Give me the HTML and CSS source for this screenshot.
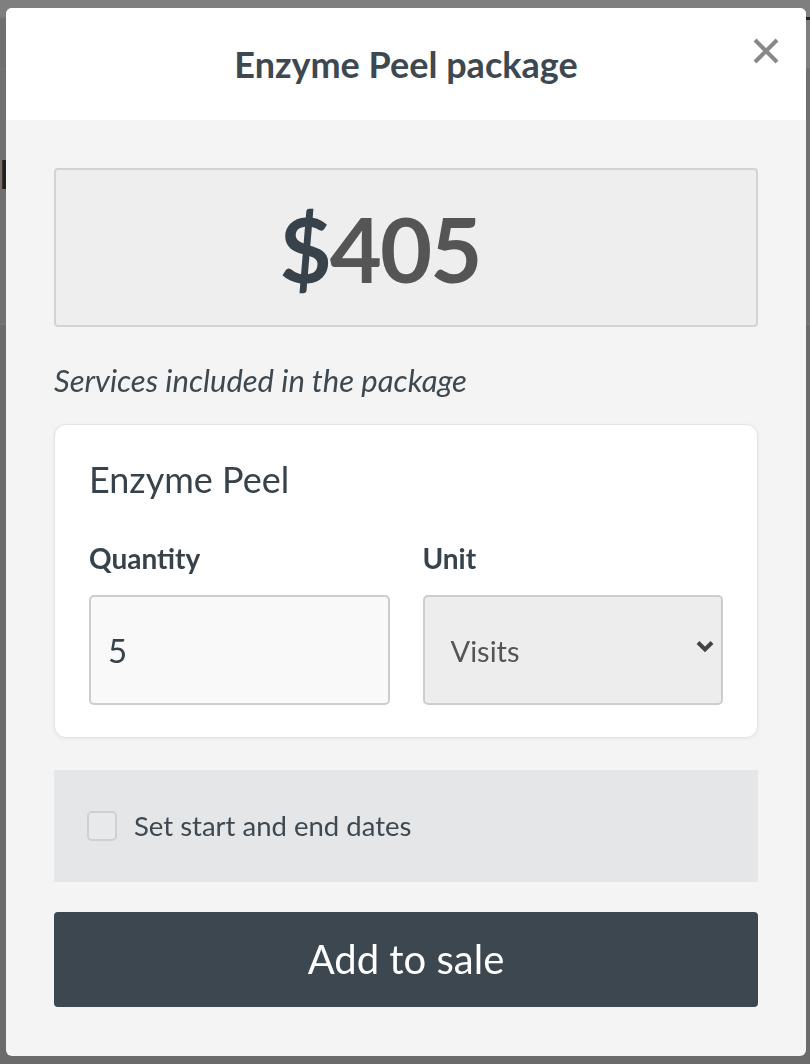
FILE: index.html
```html
<!DOCTYPE html>
<html lang="en">
<head>
<meta charset="utf-8">
<title>Enzyme Peel package</title>
<link rel="stylesheet" href="styles.css">
</head>
<body>
<div class="page">
  <div class="page-top"></div>
  <div class="page-header">
    <div class="ph-left"></div>
    <div class="ph-right"></div>
  </div>
  <div class="page-main">
    <div class="page-title">F</div>
  </div>
  <div class="page-rest"></div>
</div>

<div class="overlay">
  <div class="modal">
    <div class="modal-header">
      <h2 class="modal-title">Enzyme Peel package</h2>
      <button class="close-btn" aria-label="Close">
        <svg width="26" height="26" viewBox="0 0 26 26"><path d="M2 2 L24 24 M24 2 L2 24" stroke="#888888" stroke-width="4" fill="none"/></svg>
      </button>
    </div>
    <div class="modal-body">
      <div class="price-box"><span class="currency">$</span><span class="amount">405</span></div>
      <p class="section-label">Services included in the package</p>
      <div class="service-card">
        <div class="service-name">Enzyme Peel</div>
        <div class="fields">
          <div class="field">
            <label class="field-label">Quantity</label>
            <input class="qty-input" type="text" value="5">
          </div>
          <div class="field">
            <label class="field-label">Unit</label>
            <div class="select-box">
              <span class="select-value">Visits</span>
              <svg class="chevron" width="18" height="13" viewBox="0 0 18 13"><path d="M2 2.5 L9 9.5 L16 2.5" stroke="#444444" stroke-width="4" fill="none"/></svg>
            </div>
          </div>
        </div>
      </div>
      <label class="dates-row">
        <span class="checkbox"></span>
        <span class="dates-text">Set start and end dates</span>
      </label>
      <button class="add-btn">Add to sale</button>
    </div>
  </div>
</div>
</body>
</html>
```

FILE: styles.css
```css
* { box-sizing: border-box; }

html, body {
  margin: 0;
  padding: 0;
  height: 100%;
  overflow: hidden;
}

body {
  font-family: "Lato", "Open Sans", sans-serif;
  background: #d6d6d6;
}

/* underlying page */
.page-top {
  height: 17px;
  background: #ffffff;
}
.page-header {
  display: flex;
  height: 53px;
  border-bottom: 2px solid #e6e6e6;
}
.ph-left {
  flex: 1;
  background: #dedede;
  border-top: 2px solid #eaeaea;
}
.ph-right {
  width: 12px;
  background: #ffffff;
  border-top: 3px solid #444444;
}
.page-main {
  height: 255px;
  background: #e0e0e0;
  padding-top: 84px;
  border-bottom: 2px solid #ececec;
}
.page-title {
  font-size: 40px;
  font-weight: 700;
  color: #37424a;
  margin-left: -1px;
  line-height: 40px;
}

/* overlay and modal */
.overlay {
  position: fixed;
  inset: 0;
  background: rgba(0, 0, 0, 0.5);
  padding: 8px 4px 8px 6px;
}

.modal {
  width: 800px;
  height: 1048px;
  background: #f4f4f4;
  border-radius: 6px;
  overflow: hidden;
  display: flex;
  flex-direction: column;
}

.modal-header {
  position: relative;
  height: 112px;
  background: #ffffff;
  display: flex;
  align-items: center;
  justify-content: center;
  flex-shrink: 0;
}

.modal-title {
  margin: 0;
  font-size: 36px;
  font-weight: 700;
  color: #3d4850;
  line-height: 1.2;
  padding-top: 2px;
}

.close-btn {
  position: absolute;
  top: 30px;
  right: 27px;
  width: 26px;
  height: 26px;
  padding: 0;
  border: 0;
  background: transparent;
  display: flex;
}

.modal-body {
  padding: 48px 48px 49px;
  display: flex;
  flex-direction: column;
}

.price-box {
  height: 159px;
  background: #eeeeee;
  border: 2px solid #d3d3d3;
  border-radius: 4px;
  display: flex;
  align-items: center;
  justify-content: center;
  font-size: 90px;
  font-weight: 700;
  line-height: 1.2;
  letter-spacing: -2px;
  padding: 1px 52px 0 0;
}
.currency { color: #37424a; }
.amount { color: #555555; }

.section-label {
  margin: 35px 0 26px;
  font-size: 31px;
  font-style: italic;
  line-height: 36px;
  color: #3d4850;
}

.service-card {
  background: #ffffff;
  border: 1px solid #e4e4e4;
  border-radius: 12px;
  box-shadow: 0 1px 4px rgba(0, 0, 0, 0.06);
  padding: 33px 34px 32px;
}

.service-name {
  font-size: 36px;
  line-height: 1.2;
  color: #37424a;
}

.fields {
  display: grid;
  grid-template-columns: 1fr 1fr;
  column-gap: 33px;
  margin-top: 41px;
}

.field {
  display: flex;
  flex-direction: column;
}

.field-label {
  font-size: 28px;
  font-weight: 700;
  line-height: 1.2;
  color: #37424a;
  margin-bottom: 19px;
}

.qty-input {
  height: 110px;
  width: 100%;
  border: 2px solid #cdcdcd;
  border-radius: 5px;
  background: #f9f9f9;
  padding: 0 17px;
  font-family: "Lato", sans-serif;
  font-size: 33px;
  color: #37424a;
  outline: none;
}

.select-box {
  height: 110px;
  border: 2px solid #cdcdcd;
  border-radius: 5px;
  background: #ededed;
  padding: 0 7px 0 26px;
  display: flex;
  align-items: center;
  justify-content: space-between;
}

.select-value {
  font-size: 29px;
  color: #555555;
  padding-top: 2px;
}

.chevron { margin-top: -6px; }

.dates-row {
  margin-top: 32px;
  height: 112px;
  background: #e5e6e8;
  display: flex;
  align-items: center;
  padding-left: 33px;
  gap: 17px;
}

.checkbox {
  width: 30px;
  height: 30px;
  border: 2px solid #cfd0d2;
  border-radius: 5px;
  background: #e8e9eb;
  flex-shrink: 0;
}

.dates-text {
  font-size: 27.5px;
  color: #3d4850;
  line-height: 1.2;
}

.add-btn {
  margin-top: 30px;
  height: 95px;
  border: 0;
  border-radius: 4px;
  background: #3c474f;
  color: #ffffff;
  font-family: "Lato", sans-serif;
  font-size: 40px;
  line-height: 1.2;
  padding: 0;
}
```
